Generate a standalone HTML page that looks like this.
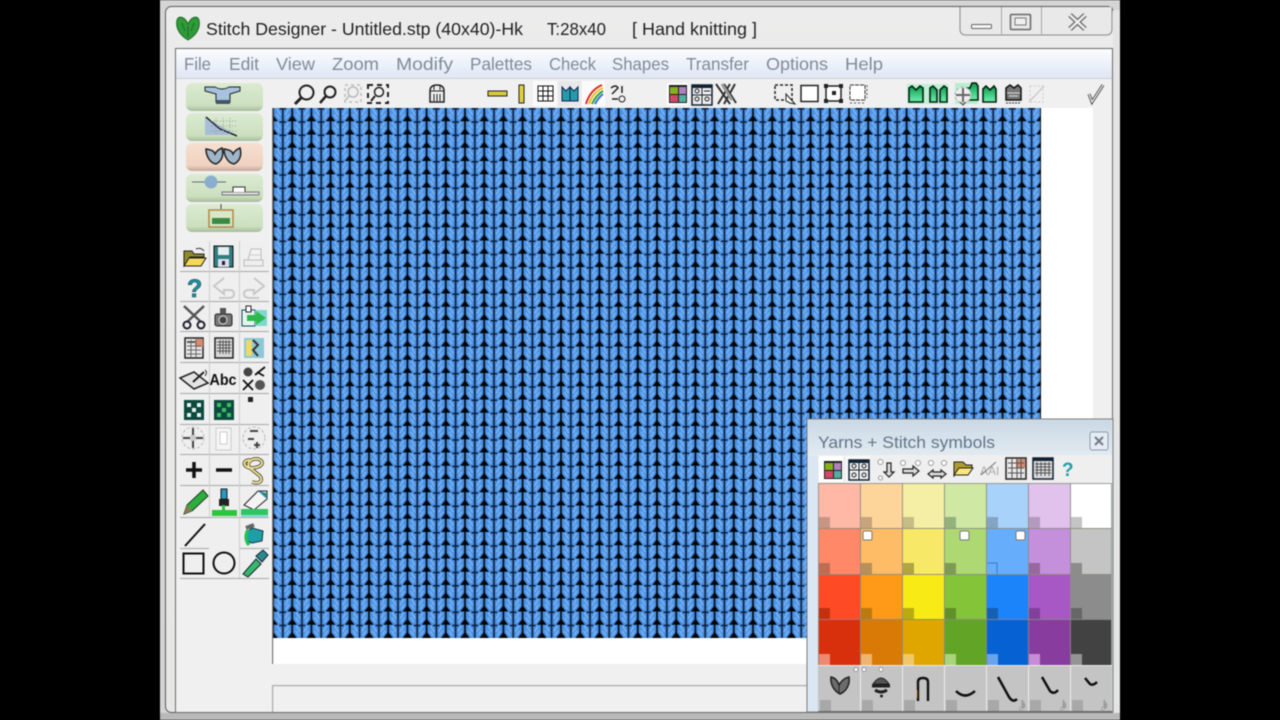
<!DOCTYPE html>
<html><head><meta charset="utf-8"><title>Stitch Designer</title>
<style>html,body{margin:0;padding:0;background:#000;width:1280px;height:720px;overflow:hidden}svg{display:block;filter:blur(.45px)}text{font-family:"Liberation Sans",sans-serif}</style></head>
<body>
<svg width="1280" height="720" viewBox="0 0 1280 720" xmlns="http://www.w3.org/2000/svg">
<defs>
<linearGradient id="glass" x1="0" y1="0" x2="0" y2="1"><stop offset="0" stop-color="#ececec"/><stop offset="1" stop-color="#e6e6e4"/></linearGradient>
<linearGradient id="menu" x1="0" y1="0" x2="0" y2="1"><stop offset="0" stop-color="#fbfcfe"/><stop offset="1" stop-color="#e0e7f4"/></linearGradient>
<linearGradient id="head" x1="0" y1="0" x2="0" y2="1"><stop offset="0" stop-color="#cbd9e5"/><stop offset="1" stop-color="#e3ebf2"/></linearGradient>
<linearGradient id="gb" x1="0" y1="0" x2="0" y2="1"><stop offset="0" stop-color="#dcebd2"/><stop offset=".8" stop-color="#cbe0bf"/><stop offset="1" stop-color="#a5bb9a"/></linearGradient>
<linearGradient id="pb" x1="0" y1="0" x2="0" y2="1"><stop offset="0" stop-color="#f6dfd0"/><stop offset=".8" stop-color="#f0d2c0"/><stop offset="1" stop-color="#c2a797"/></linearGradient>
<linearGradient id="vest" x1="0" y1="0" x2="0" y2="1"><stop offset="0" stop-color="#0c9c4c"/><stop offset="1" stop-color="#6ff0b0"/></linearGradient>
<pattern id="st" x="273" y="108" width="19.2" height="13.25" patternUnits="userSpaceOnUse">
<rect width="19.2" height="13.25" fill="#4d92e4"/>
<path d="M4 1L7.500 7M15.500 1L12 7M3.500 6L6.500 11M16 6L13 11" stroke="#7ab4f2" stroke-width="1.600" fill="none"/>
<rect x="-.9" y="0" width="1.800" height="13.250" fill="#04101c"/><rect x="18.300" y="0" width="1.800" height="13.250" fill="#04101c"/>
<path d="M-4.800 13.250L0 7L4.800 13.250Z" fill="#01060c"/><path d="M14.400 13.250L19.200 7L24 13.250Z" fill="#01060c"/>
<rect x="9" y="0" width="1.600" height="13.250" fill="#0a1c36"/><path d="M6.500 0H13V1.500H6.500Z" fill="#0a1c36"/>
</pattern>
</defs>

<rect width="1280" height="720" fill="#000"/>
<rect x="160" y="0" width="960" height="720" fill="#d4d4d4"/>
<rect x="160" y="713" width="960" height="7" fill="#b9b9b9"/>
<rect x="165.500" y="6.500" width="948" height="706" rx="6" fill="url(#glass)" stroke="#5a5a5a"/>
<rect x="1113" y="10" width="7" height="703" fill="#e4e4e4"/>

<!-- logo + title -->
<path d="M177 20C179 15 185 17 188 24C191 17 197 15 199 20C201 29 195 36 188 40C181 36 175 29 177 20Z" fill="#2f9a38" stroke="#1c6e26"/>
<path d="M188 26V37M182 23L185 31M194 23L191 31" stroke="#1c6e26" fill="none"/>
<text x="206" y="35" font-size="17.500" fill="#222" textLength="317" lengthAdjust="spacingAndGlyphs">Stitch Designer - Untitled.stp (40x40)-Hk</text>
<text x="547" y="35" font-size="17.500" fill="#222" textLength="59" lengthAdjust="spacingAndGlyphs">T:28x40</text>
<text x="632" y="35" font-size="17.500" fill="#222" textLength="125" lengthAdjust="spacingAndGlyphs">[ Hand knitting ]</text>

<!-- caption buttons -->
<path d="M960 7V29Q960 35 966 35H1106Q1112 35 1112 29V7" fill="#e9e9e9" stroke="#8a8a8a"/>
<path d="M1001.500 7V35M1041.500 7V35" stroke="#a8a8a8"/>
<rect x="971.500" y="24.500" width="20" height="4" rx="1" fill="#f5f5f5" stroke="#666"/>
<rect x="1010.500" y="14.500" width="20" height="15" rx="1" fill="none" stroke="#666" stroke-width="1.500"/>
<rect x="1015" y="18" width="11" height="7" fill="#f0f0f0" stroke="#777"/>
<path d="M1070 15L1085 29M1085 15L1070 29" stroke="#6a6a6a" stroke-width="5"/>
<path d="M1070 15L1085 29M1085 15L1070 29" stroke="#efefef" stroke-width="2.500"/>

<!-- client -->
<rect x="175.500" y="48.500" width="937" height="664" fill="#f0f0f0" stroke="#6a6a6a"/>
<rect x="176" y="49" width="936" height="29" fill="url(#menu)"/>
<rect x="176" y="78" width="936" height="1" fill="#cfd3d8"/>
<g font-size="17.500" fill="#7f8b9b">
<text x="184" y="70" textLength="27" lengthAdjust="spacingAndGlyphs">File</text>
<text x="229" y="70" textLength="30" lengthAdjust="spacingAndGlyphs">Edit</text>
<text x="276" y="70" textLength="39" lengthAdjust="spacingAndGlyphs">View</text>
<text x="332" y="70" textLength="47" lengthAdjust="spacingAndGlyphs">Zoom</text>
<text x="396" y="70" textLength="57" lengthAdjust="spacingAndGlyphs">Modify</text>
<text x="470" y="70" textLength="62" lengthAdjust="spacingAndGlyphs">Palettes</text>
<text x="549" y="70" textLength="47" lengthAdjust="spacingAndGlyphs">Check</text>
<text x="612" y="70" textLength="57" lengthAdjust="spacingAndGlyphs">Shapes</text>
<text x="686" y="70" textLength="63" lengthAdjust="spacingAndGlyphs">Transfer</text>
<text x="766" y="70" textLength="62" lengthAdjust="spacingAndGlyphs">Options</text>
<text x="845" y="70" textLength="38" lengthAdjust="spacingAndGlyphs">Help</text>
</g>

<!-- canvas -->
<rect x="273" y="108" width="820" height="556" fill="#fff"/>
<rect x="273" y="108" width="768" height="530" fill="url(#st)"/>
<rect x="272" y="108" width="1.200" height="556" fill="#777"/>
<rect x="272" y="685" width="535" height="1.200" fill="#aaa"/>
<rect x="272" y="685" width="1.200" height="27" fill="#aaa"/>

<!-- left mode buttons -->
<rect x="186" y="83" width="77" height="28" rx="6" fill="url(#gb)"/>
<rect x="186" y="113" width="77" height="28" rx="6" fill="url(#gb)"/>
<rect x="186" y="143" width="77" height="28" rx="6" fill="url(#pb)"/>
<rect x="186" y="174" width="77" height="28" rx="6" fill="url(#gb)"/>
<rect x="186" y="204" width="77" height="28" rx="6" fill="url(#gb)"/>
<path d="M205 87H215Q222 91 229 87H240V91L230 94V102H216V94L205 91Z" fill="#a6c2dc" stroke="#222"/>
<rect x="216" y="100" width="14" height="4" fill="#456"/>
<path d="M205 117V135H237L205 117Z" fill="#a6bed6"/><path d="M206 117L220 129L237 136" stroke="#111" stroke-width="1.300" fill="none"/>
<path d="M211 121H236M211 126H236M211 131H236M216 118V135M223 118V135M230 118V135" stroke="#99a" stroke-dasharray="1 2"/>
<path d="M206 149C212 150 214 151 215 154C217 150 220 149 222 148C224 155 222 161 216 164C210 163 206 156 206 149Z" fill="#9fb6ca" stroke="#222" stroke-width="1.500"/>
<path d="M224 149C230 150 232 151 233 154C235 150 238 149 240 148C242 155 240 161 234 164C228 163 224 156 224 149Z" fill="#9fb6ca" stroke="#222" stroke-width="1.500"/>
<path d="M192 182H226" stroke="#667"/><circle cx="211" cy="182" r="6.500" fill="#8aaed0"/>
<path d="M222 192H259V195H222Z" fill="#ddd" stroke="#555" stroke-width=".7"/><path d="M233 192V187H245V192" fill="#fff" stroke="#333"/>
<rect x="209" y="210" width="24" height="17" fill="#d8e8c8" stroke="#b08848" stroke-width="1.500"/><rect x="212" y="218" width="18" height="6" fill="#3a8a44"/><path d="M221 204V209" stroke="#444"/>

<!-- tool grid -->
<rect x="180" y="241" width="89" height="338" fill="#efefef"/>
<g stroke="#a8a8a8" fill="none">
<path d="M180 271.500H269M180 301.500H269M180 331.500H269M180 362.500H269M180 393.500H269M180 424.500H269M180 454.500H269M180 485.500H269M180 517.500H269M180 548.500H209M239 548.500H269M180 578.500H269"/>
</g>
<g stroke="#cfcfcf" fill="none"><path d="M209.500 241V517M239.500 241V578"/></g>
<rect x="270" y="108" width="2" height="556" fill="#f4f4f4"/>

<!-- row 1 -->
<path d="M184 251H192L194 254H204V257H190L184 266Z" fill="#8f8a2c" stroke="#222"/><path d="M184 266L189 258H206L201 266Z" fill="#f5d85a" stroke="#222"/>
<path d="M196 249Q201 247 204 251" stroke="#333" fill="none"/>
<rect x="214" y="246" width="19" height="21" fill="#2f7f82" stroke="#111"/><rect x="218" y="247" width="11" height="8" fill="#e8eef0"/><rect x="218" y="259" width="11" height="8" fill="#dde"/><rect x="222" y="261" width="3" height="4" fill="#222"/>
<path d="M244 260H263V266H244Z" fill="#eee" stroke="#bbb"/><path d="M248 260L251 249H261V260Z" fill="#f2f2f2" stroke="#bbb"/><path d="M250 255H260" stroke="#ccc"/>
<!-- row 2 -->
<text x="187" y="297" font-size="25" font-weight="bold" fill="#1f8fa0" stroke="#0b3a44" stroke-width=".5">?</text>
<path d="M224 278L214 286L224 294V290H230Q234 290 234 294Q234 298 228 298H219" fill="none" stroke="#c8c8c8" stroke-width="2"/>
<path d="M254 278L264 286L254 294V290H248Q244 290 244 294Q244 298 250 298H259" fill="none" stroke="#c8c8c8" stroke-width="2"/>
<!-- row 3 -->
<path d="M184 306L201 322M204 306L187 322" stroke="#555" stroke-width="2.500"/><circle cx="187" cy="325" r="3.500" fill="none" stroke="#223" stroke-width="2"/><circle cx="201" cy="325" r="3.500" fill="none" stroke="#223" stroke-width="2"/>
<rect x="215" y="314" width="17" height="12" rx="2" fill="#777" stroke="#222"/><circle cx="223" cy="320" r="4" fill="#444" stroke="#ddd"/><rect x="220" y="308" width="6" height="6" fill="#555"/>
<rect x="242" y="310" width="13" height="16" fill="#e4f6f0" stroke="#145"/><rect x="255" y="310" width="12" height="16" fill="#7fd8d0"/><path d="M247 315H256V311L266 318L256 325V321H247Z" fill="#2eb84c"/><rect x="246" y="306" width="5" height="6" fill="#fff" stroke="#222"/>
<!-- row 4 -->
<rect x="185" y="338" width="18" height="20" fill="#e8e8e8" stroke="#222" stroke-width="1.500"/><rect x="195" y="339" width="8" height="8" fill="#d88a70"/><rect x="187" y="341" width="8" height="2" fill="#555"/><path d="M187 346H201M187 350H201M187 354H201M191 340V357M196 340V357" stroke="#666" fill="none"/>
<rect x="215" y="338" width="18" height="20" fill="#d8d8d8" stroke="#222" stroke-width="1.500"/><path d="M217 342H231M217 345H231M217 348H231M217 351H231M220 340V354M223 340V354M226 340V354M229 340V354" stroke="#555"/>
<rect x="244" y="338" width="20" height="20" fill="#8bc8d8"/><rect x="246" y="340" width="6" height="16" fill="#f0d860"/><path d="M253 340L258 345L253 350L258 356" stroke="#333" stroke-width="2" fill="none"/>
<!-- row 5 -->
<path d="M180 378L194 372L208 383L194 389Z" fill="#e4e4e4" stroke="#222" stroke-width="1.500"/><path d="M193 382L204 372" stroke="#222" stroke-width="2"/><path d="M205 370Q208 372 205 376" stroke="#333" fill="none"/>
<text x="209.500" y="385" font-size="16" font-weight="bold" fill="#111" textLength="27" lengthAdjust="spacingAndGlyphs">Abc</text>
<circle cx="248" cy="372" r="4.500" fill="#444"/><circle cx="260" cy="385" r="5" fill="#555"/><path d="M255 375L265 367M243 380L253 390M243 390L253 380M257 372L264 376" stroke="#111" stroke-width="1.800"/>
<!-- row 6 -->
<g fill="#0c4a40"><rect x="184" y="400" width="20" height="20"/></g>
<g fill="#e8f4f0"><rect x="187" y="403" width="4" height="4"/><rect x="197" y="403" width="4" height="4"/><rect x="192" y="408" width="4" height="4"/><rect x="187" y="413" width="4" height="4"/><rect x="197" y="413" width="4" height="4"/></g>
<rect x="214" y="400" width="20" height="20" fill="#0c4a40"/>
<g fill="#3ec060"><rect x="217" y="403" width="4" height="4"/><rect x="227" y="403" width="4" height="4"/><rect x="222" y="408" width="4" height="4"/><rect x="217" y="413" width="4" height="4"/><rect x="227" y="413" width="4" height="4"/></g>
<rect x="248" y="397" width="5" height="5" fill="#222"/>
<!-- row 7 -->
<circle cx="193" cy="438" r="11" fill="#eee" stroke="#bbb" stroke-dasharray="3 2"/><path d="M193 428V448M183 438H203" stroke="#444" stroke-width="2"/><rect x="190" y="435" width="6" height="6" fill="#ccc"/>
<rect x="216" y="428" width="15" height="22" fill="#f5f5f5" stroke="#ccc"/><rect x="220" y="432" width="7" height="12" fill="#fff" stroke="#ccc"/>
<circle cx="254" cy="438" r="11" fill="#eee" stroke="#bbb" stroke-dasharray="3 2"/><path d="M250 431H258M248 439H254M254 445H260M257 442V448" stroke="#444" stroke-width="2"/>
<!-- row 8 -->
<path d="M186 470H202M194 462V478" stroke="#111" stroke-width="3.500"/>
<path d="M216 470H232" stroke="#111" stroke-width="3.500"/>
<path d="M250 460C242 460 243 467 250 468C262 468 266 462 258 459C252 458 245 463 250 468L260 476C264 482 258 484 252 482" fill="none" stroke="#333" stroke-width="3.500"/>
<path d="M250 460C242 460 243 467 250 468C262 468 266 462 258 459C252 458 245 463 250 468L260 476C264 482 258 484 252 482" fill="none" stroke="#f1e58e" stroke-width="2"/>
<!-- row 9 -->
<path d="M184 514L187 505L203 490L208 496L192 511Z" fill="#2dae3c" stroke="#1c3a20"/><path d="M184 514L187 505L192 511Z" fill="#8a7a50"/>
<rect x="221" y="489" width="6" height="10" fill="#2e98b8" stroke="#123"/><rect x="219" y="499" width="10" height="7" fill="#222"/><rect x="212" y="510" width="25" height="6" fill="#2cc63c"/><rect x="222" y="505" width="3" height="6" fill="#2cc63c"/>
<path d="M244 505L258 491H267V499L254 510Z" fill="#f4f4f4" stroke="#222"/><path d="M258 491L267 499V493Z" fill="#2a8a90"/><rect x="241" y="509" width="27" height="6" fill="#2cc660"/><rect x="241" y="515" width="27" height="2" fill="#8ce0e0"/>
<!-- row 10 -->
<path d="M185 546L205 524" stroke="#111" stroke-width="2"/>
<path d="M246 528L254 525" stroke="#666" stroke-width="4"/><path d="M247 532C245 538 248 542 252 543L262 541L263 531L252 528Z" fill="#1e9fa8" stroke="#134"/><path d="M248 530C245 536 246 541 249 545" stroke="#22c050" stroke-width="3.500" fill="none"/>
<!-- row 11 -->
<rect x="183.500" y="553.500" width="20" height="20" fill="none" stroke="#111" stroke-width="2"/>
<circle cx="224" cy="563" r="10.500" fill="none" stroke="#111" stroke-width="2"/>
<path d="M243 574L256 559L261 564L248 577Z" fill="#36b96c" stroke="#123"/><path d="M256 556L263 550L268 555L262 562Z" fill="#2a8a90" stroke="#123"/>

<!-- toolbar icons -->
<g fill="none" stroke="#222" stroke-width="2">
<circle cx="306.500" cy="92.500" r="7"/><path d="M301 98L295 104" stroke-width="3"/>
<circle cx="330" cy="92" r="5.500"/><path d="M326 96L320 103" stroke-width="2.500"/>
</g>
<g fill="none" stroke="#bbb" stroke-width="1.500"><circle cx="353" cy="92" r="5"/><path d="M345 85H361V102H345Z" stroke-dasharray="3 3"/><path d="M349 96L345 101"/></g>
<path d="M368 85H388V103H368Z" fill="none" stroke="#222" stroke-width="2" stroke-dasharray="5 4"/><circle cx="379" cy="92" r="4.500" fill="none" stroke="#222" stroke-width="1.500"/><path d="M375 96L371 101" stroke="#222" stroke-width="2"/>
<path d="M430 102V91Q430 85 437 85Q444 85 444 91V102Z" fill="#eee" stroke="#222" stroke-width="1.500"/><path d="M430 91H444M434 94V101M437 94V101M440 94V101M434 86V90M440 86V90" stroke="#222"/>

<rect x="488" y="91" width="19" height="5" fill="#d8c840" stroke="#222"/>
<rect x="519" y="85" width="5" height="18" fill="#e0d040" stroke="#222"/>
<rect x="533" y="81" width="24" height="25" fill="#fafafa"/><rect x="538" y="86" width="15" height="15" fill="#fff" stroke="#111"/><path d="M538 91H553M538 96H553M543 86V101M548 86V101" stroke="#111"/>
<rect x="558" y="81" width="23" height="25" fill="#e8e8e8"/>
<path d="M562 87L566 91L570 87V101H562ZM570 87L574 91L578 87V101H570Z" fill="#249ca8" stroke="#125"/>
<rect x="582" y="81" width="23" height="25" fill="#fafafa"/>
<path d="M586 104Q590 90 602 85" fill="none" stroke="#e02828" stroke-width="2"/><path d="M589 104Q593 92 603 88" fill="none" stroke="#e8c020" stroke-width="2"/><path d="M592 104Q596 95 603 91" fill="none" stroke="#30a040" stroke-width="2"/><path d="M595 104Q598 98 603 94" fill="none" stroke="#3070d8" stroke-width="2"/>
<path d="M611 88Q616 84 618 88L612 94M622 86V93M612 99H618" fill="none" stroke="#222" stroke-width="1.500"/><circle cx="622" cy="99" r="3" fill="none" stroke="#222"/>

<rect x="667" y="83" width="21" height="22" fill="#fff"/><rect x="669" y="85" width="18" height="18" fill="#222"/><rect x="670" y="87" width="8" height="7" fill="#86b020"/><rect x="679" y="87" width="7" height="7" fill="#b080c0"/><rect x="670" y="95" width="8" height="7" fill="#d04868"/><rect x="679" y="95" width="7" height="7" fill="#50b0a0"/>
<rect x="692" y="85" width="20" height="20" fill="#eee" stroke="#123" stroke-width="1.500"/><rect x="692" y="85" width="20" height="3" fill="#123"/><path d="M702 85V105M692 95H712" stroke="#123"/><circle cx="697" cy="91" r="2" fill="none" stroke="#222"/><circle cx="707" cy="99" r="2" fill="none" stroke="#222"/><circle cx="697" cy="99" r="2" fill="none" stroke="#222"/><path d="M704 91H710" stroke="#222"/>
<path d="M716 84L730 104M735 84L724 104M718 104L730 84M736 103L724 84" fill="none" stroke="#333" stroke-width="2"/><path d="M722 84L732 100" stroke="#999" stroke-width="3"/>

<rect x="775" y="85" width="17" height="15" fill="none" stroke="#222" stroke-width="1.500" stroke-dasharray="3 2"/><path d="M786 94L795 104L790 103L786 101Z" fill="#fff" stroke="#222"/>
<rect x="801" y="85.500" width="17" height="16" fill="#fff" stroke="#222" stroke-width="1.500"/>
<rect x="826" y="86" width="15" height="15" fill="#fff" stroke="#222" stroke-width="1.500"/><rect x="824" y="84" width="4" height="4" fill="#222"/><rect x="839" y="84" width="4" height="4" fill="#222"/><rect x="824" y="99" width="4" height="4" fill="#222"/><rect x="839" y="99" width="4" height="4" fill="#222"/><rect x="832" y="91" width="4" height="4" fill="#222"/>
<rect x="850" y="85" width="15" height="15" fill="#fff" stroke="#333" stroke-dasharray="4 1"/><path d="M867 85V98M850 103H865" stroke="#555" stroke-dasharray="2 2"/>

<rect x="907" y="84" width="41" height="20" fill="#8ff0bc" opacity=".5"/>
<rect x="955" y="83" width="23" height="21" fill="#8ff0bc" opacity=".6"/>
<g stroke="#06200f" stroke-width="1.600" fill="url(#vest)">
<path d="M909 88L912 86L916 90L920 86L923 88V102H909Z"/>
<path d="M930 88L933 86L937 90V102H930ZM940 90L944 86L947 88V102H940Z"/>
<path d="M966 88H970L972 83H976L978 86V100H966Z"/>
<path d="M983 89L986 86L990 90L994 86L996 89V102H983Z"/>
</g>
<circle cx="963" cy="95" r="8" fill="#eee" stroke="#aaa" stroke-dasharray="3 2"/><path d="M963 88V102M956 95H970" stroke="#666" stroke-width="2"/><path d="M960 102L963 105L966 102" fill="none" stroke="#444"/>
<path d="M1006 88L1010 85L1014 88L1018 85L1021 88V100H1006Z" fill="#777" stroke="#111" stroke-width="1.500"/><path d="M1007 93H1020M1009 96H1018" stroke="#ddd"/><path d="M1006 103H1021" stroke="#333" stroke-dasharray="2 1"/>
<path d="M1030 86H1043V102H1030Z" fill="none" stroke="#ccc" stroke-dasharray="2 2"/><path d="M1029 102L1044 86" stroke="#ccc" stroke-width="1.500"/>
<path d="M1089 94L1092 102L1103 85" fill="none" stroke="#444" stroke-width="3"/><path d="M1089 94L1092 102L1103 85" fill="none" stroke="#f4f4f4" stroke-width="1.200"/>

<!-- palette window -->
<rect x="807" y="419" width="306" height="293" fill="#dae6f1" stroke="#7a7a7a"/>
<rect x="808" y="420" width="304" height="36" fill="url(#head)"/>
<rect x="818" y="455" width="294" height="28" fill="#efefef"/>
<text x="818" y="448" font-size="17" fill="#617689" textLength="177" lengthAdjust="spacingAndGlyphs">Yarns + Stitch symbols</text>
<rect x="1090" y="432" width="18" height="18" rx="2" fill="#e4ecf3" stroke="#8b9aa8"/>
<path d="M1095 437L1103 445M1103 437L1095 445" stroke="#778" stroke-width="2"/>
<rect x="819" y="456" width="24" height="26" fill="#fff"/>
<rect x="846" y="456" width="24" height="26" fill="#fafafa"/>
<rect x="824" y="461" width="18" height="18" fill="#222"/><rect x="825" y="463" width="8" height="7" fill="#86b020"/><rect x="834" y="463" width="7" height="7" fill="#b080c0"/><rect x="825" y="471" width="8" height="7" fill="#d04868"/><rect x="834" y="471" width="7" height="7" fill="#50b0a0"/>
<rect x="849" y="460" width="20" height="20" fill="#eee" stroke="#123" stroke-width="1.500"/><rect x="849" y="460" width="20" height="3" fill="#123"/><path d="M859 460V480M849 470H869" stroke="#123"/><circle cx="854" cy="475" r="2" fill="none" stroke="#222"/><circle cx="864" cy="475" r="2" fill="none" stroke="#222"/><circle cx="854" cy="466" r="2" fill="none" stroke="#222"/><circle cx="864" cy="466" r="2" fill="none" stroke="#222"/>
<g fill="#ddd" stroke="#222" stroke-width="1.200">
<path d="M887 463H891V472H894L889 477L884 472H887Z"/>
<path d="M903 469H913V466L919 471L913 476V473H903Z"/>
<path d="M933 470L928 474L933 478V476H941V478L946 474L941 470V472H933Z"/>
</g>
<g fill="#fff" stroke="#999"><circle cx="880.500" cy="462" r="2.500"/><circle cx="880.500" cy="478" r="2"/><circle cx="903" cy="463" r="2.500"/><circle cx="918" cy="463" r="2.500"/><circle cx="931" cy="463" r="2.500"/><circle cx="944" cy="463" r="2.500"/></g>
<path d="M954 462H963L966 465H972V469H960L954 476Z" fill="#b09a30" stroke="#222"/><path d="M954 475L959 468H973L968 475Z" fill="#f8e878" stroke="#222"/>
<text x="980" y="475" font-size="12" fill="#aaa">AAI</text><path d="M981 475L996 462" stroke="#777"/>
<rect x="1006" y="458" width="20" height="21" fill="#e8e8e8" stroke="#222" stroke-width="1.500"/><rect x="1016" y="459" width="9" height="9" fill="#d88a70"/><path d="M1008 463H1024M1008 468H1024M1008 473H1024M1012 459V478M1017 459V478M1021 459V478" stroke="#555"/>
<rect x="1033" y="458" width="20" height="21" fill="#dcdcdc" stroke="#123" stroke-width="1.500"/><rect x="1033" y="458" width="20" height="3" fill="#123"/><path d="M1035 464H1051M1035 467H1051M1035 470H1051M1035 473H1051M1037 462V476M1041 462V476M1045 462V476M1049 462V476" stroke="#555"/>
<text x="1062" y="476" font-size="19" font-weight="bold" fill="#1f9fa8">?</text>

<!-- palette swatches -->
<g stroke="#8a8a80" stroke-width=".8">
<rect x="818.500" y="483.500" width="42" height="45" fill="#ffb8a6"/><rect x="860.500" y="483.500" width="42" height="45" fill="#fdd49a"/><rect x="902.500" y="483.500" width="42" height="45" fill="#f5efa6"/><rect x="944.500" y="483.500" width="42" height="45" fill="#cfe8a4"/><rect x="986.500" y="483.500" width="42" height="45" fill="#a9d2fb"/><rect x="1028.500" y="483.500" width="42" height="45" fill="#e0c2ec"/><rect x="1070.500" y="483.500" width="41" height="45" fill="#ffffff"/>
<rect x="818.500" y="528.500" width="42" height="46" fill="#ff8868"/><rect x="860.500" y="528.500" width="42" height="46" fill="#ffbc66"/><rect x="902.500" y="528.500" width="42" height="46" fill="#f8e868"/><rect x="944.500" y="528.500" width="42" height="46" fill="#aed872"/><rect x="986.500" y="528.500" width="42" height="46" fill="#66aefc"/><rect x="1028.500" y="528.500" width="42" height="46" fill="#c490dc"/><rect x="1070.500" y="528.500" width="41" height="46" fill="#c4c4c4"/>
<rect x="818.500" y="574.500" width="42" height="45" fill="#ff4a26"/><rect x="860.500" y="574.500" width="42" height="45" fill="#ff9a18"/><rect x="902.500" y="574.500" width="42" height="45" fill="#f8ea14"/><rect x="944.500" y="574.500" width="42" height="45" fill="#84c438"/><rect x="986.500" y="574.500" width="42" height="45" fill="#1c84fa"/><rect x="1028.500" y="574.500" width="42" height="45" fill="#a858c4"/><rect x="1070.500" y="574.500" width="41" height="45" fill="#8c8c8c"/>
<rect x="818.500" y="619.500" width="42" height="46" fill="#d8300c"/><rect x="860.500" y="619.500" width="42" height="46" fill="#da7a06"/><rect x="902.500" y="619.500" width="42" height="46" fill="#e0a600"/><rect x="944.500" y="619.500" width="42" height="46" fill="#62a426"/><rect x="986.500" y="619.500" width="42" height="46" fill="#0662d2"/><rect x="1028.500" y="619.500" width="42" height="46" fill="#883c9e"/><rect x="1070.500" y="619.500" width="41" height="46" fill="#424242"/>
</g>
<g>
<rect x="819" y="517" width="11" height="11" fill="#c89484"/><rect x="861" y="517" width="11" height="11" fill="#c8a47c"/><rect x="903" y="517" width="11" height="11" fill="#c4be84"/><rect x="945" y="517" width="11" height="11" fill="#94b27c"/><rect x="987" y="517" width="11" height="11" fill="#84a4c4"/><rect x="1029" y="517" width="11" height="11" fill="#b49ac0"/><rect x="1071" y="517" width="11" height="11" fill="#c4c4c4"/>
<rect x="819" y="563" width="11" height="11" fill="#c06c54"/><rect x="861" y="563" width="11" height="11" fill="#b8905a"/><rect x="903" y="563" width="11" height="11" fill="#b0a444"/><rect x="945" y="563" width="11" height="11" fill="#7c9c54"/><rect x="1029" y="563" width="11" height="11" fill="#96689e"/><rect x="1071" y="563" width="11" height="11" fill="#8c8c8c"/>
<rect x="819" y="608" width="11" height="11" fill="#c4300e"/><rect x="861" y="608" width="11" height="11" fill="#bc7a0e"/><rect x="903" y="608" width="11" height="11" fill="#b8ac10"/><rect x="945" y="608" width="11" height="11" fill="#5e9228"/><rect x="987" y="608" width="11" height="11" fill="#1460b4"/><rect x="1029" y="608" width="11" height="11" fill="#80409c"/><rect x="1071" y="608" width="11" height="11" fill="#666"/>
<rect x="819" y="654" width="11" height="11" fill="#ee8870"/><rect x="861" y="654" width="11" height="11" fill="#eeb470"/><rect x="903" y="654" width="11" height="11" fill="#f0c868"/><rect x="945" y="654" width="11" height="11" fill="#a8d47c"/><rect x="987" y="654" width="11" height="11" fill="#68a4ec"/><rect x="1029" y="654" width="11" height="11" fill="#c88cd4"/><rect x="1071" y="654" width="11" height="11" fill="#949494"/>
</g>
<path d="M987.500 563H997V574" fill="none" stroke="#3a7ac8"/>
<g fill="#fff" stroke="#777"><rect x="863" y="531" width="9" height="9" rx="1.500"/><rect x="960" y="531" width="9" height="9" rx="1.500"/><rect x="1016" y="531" width="9" height="9" rx="1.500"/></g>

<!-- symbols row -->
<rect x="818" y="666" width="294" height="46" fill="#c4c4c4"/>
<path d="M860.500 666V712M902.500 666V712M944.500 666V712M986.500 666V712M1028.500 666V712M1070.500 666V712" stroke="#eee"/>
<path d="M818 665.500H1112" stroke="#e8e8e8"/><path d="M818 711.500H1112" stroke="#666"/>
<g fill="#a8a8a8"><rect x="820" y="700" width="11" height="11"/><rect x="862" y="700" width="11" height="11"/><rect x="904" y="700" width="11" height="11"/><rect x="946" y="700" width="11" height="11"/><rect x="988" y="700" width="11" height="11"/><rect x="1030" y="700" width="11" height="11"/><rect x="1072" y="700" width="11" height="11"/></g>
<path d="M831 677C836 678 838 682 839 685C841 681 845 678 849 677C850 684 847 691 840 694C834 691 830 684 831 677Z" fill="#6c6c6c" stroke="#222" stroke-width="1.500"/><path d="M839 685V693" stroke="#222"/>
<path d="M873 684Q881 672 889 684Z" fill="#555" stroke="#222"/><path d="M872 686H890M875 690Q881 694 887 690" stroke="#222" stroke-width="3" fill="none"/><circle cx="881.500" cy="696" r="1.500" fill="#222"/>
<path d="M918 701V682Q918 678 923 678Q928 678 928 682V701" fill="none" stroke="#111" stroke-width="2.400"/><path d="M917 690V698" stroke="#b8902a"/>
<path d="M956 691Q965 700 975 691" fill="none" stroke="#111" stroke-width="2.500"/>
<path d="M998 677L1009 697Q1013 703 1017 699" fill="none" stroke="#111" stroke-width="2.500"/>
<path d="M1042 677L1050 691Q1054 695 1058 690" fill="none" stroke="#111" stroke-width="2.500"/>
<path d="M1085 678L1090 684Q1093 686 1097 682" fill="none" stroke="#111" stroke-width="2.500"/>
<g fill="#eee" stroke="#999" font-size="17"><text x="1018" y="710">♪</text><text x="1059" y="710">♪</text><text x="1100" y="710">♪</text></g>
<g fill="#fff" stroke="#888" stroke-width=".8"><circle cx="856" cy="669.500" r="2"/><circle cx="864" cy="669.500" r="2"/><circle cx="881" cy="669.500" r="2"/></g>
</svg>
</body></html>
